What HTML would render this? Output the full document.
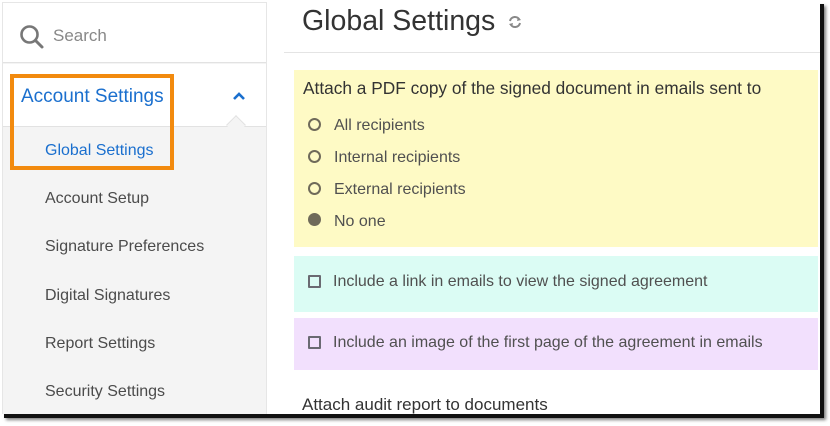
<!DOCTYPE html>
<html><head><style>
*{margin:0;padding:0;box-sizing:border-box}
body{width:830px;height:426px;background:#fff;position:relative;overflow:hidden;font-family:"Liberation Sans",sans-serif;color:#4b4b4b}
.frame{position:absolute;left:0;top:0;width:820px;height:414px;background:#fff;overflow:hidden;box-shadow:4px 4px 0 #111,6px 6px 3px rgba(0,0,0,.5)}
.side{position:absolute;left:2px;top:2px;width:265px;height:420px;background:#f4f4f4;border:1px solid #e6e6e6}
.search{position:absolute;left:0;top:0;width:263px;height:60px;background:#fff;border-bottom:1px solid #e2e2e2}
.acct{position:absolute;left:0;top:61px;width:263px;height:63px;background:#fff;border-bottom:1px solid #e2e2e2}
.t{position:absolute;font-size:16px;white-space:nowrap}
.box{position:absolute;left:294px;width:524px}
.opt{position:absolute;left:308px;font-size:16px;color:#505050;white-space:nowrap}
.rad{position:absolute;left:308px;width:13px;height:13px;border:2.5px solid #6f6a5a;border-radius:50%}
.chk{position:absolute;left:308px;width:13px;height:13px;border:2px solid #6a6a72;border-radius:1px}
</style></head><body>
<div class="frame">
<div class="side">
 <div class="search">
  <svg style="position:absolute;left:16px;top:21px" width="26" height="26" viewBox="0 0 26 26"><circle cx="10.5" cy="10.5" r="8" fill="none" stroke="#777" stroke-width="2.6"/><line x1="16.5" y1="16.5" x2="23" y2="23" stroke="#777" stroke-width="3" stroke-linecap="round"/></svg>
  <div class="t" style="left:50px;top:23px;font-size:17px;color:#888">Search</div>
 </div>
 <div class="acct">
  <div class="t" style="left:18px;top:22px;font-size:19px;color:#1a6fce">Account Settings</div>
  <svg style="position:absolute;left:229px;top:27px" width="14" height="10" viewBox="0 0 14 10"><path d="M2 8 L7 3 L12 8" fill="none" stroke="#1a6fce" stroke-width="2.6"/></svg>
  <div style="position:absolute;left:226px;top:54px;width:14px;height:14px;background:#f4f4f4;border-left:1px solid #e2e2e2;border-top:1px solid #e2e2e2;transform:rotate(45deg)"></div>
 </div>
 <div class="t" style="left:42px;top:139px;color:#1a6fce">Global Settings</div>
 <div class="t" style="left:42px;top:187px">Account Setup</div>
 <div class="t" style="left:42px;top:235px">Signature Preferences</div>
 <div class="t" style="left:42px;top:284px">Digital Signatures</div>
 <div class="t" style="left:42px;top:332px">Report Settings</div>
 <div class="t" style="left:42px;top:380px">Security Settings</div>
</div>
<div style="position:absolute;left:10px;top:74px;width:164px;height:96px;border:4px solid #f28a0e"></div>
<div class="t" style="left:302px;top:5px;font-size:28.5px;color:#333;font-weight:300">Global Settings</div>
<svg style="position:absolute;left:507px;top:14px" width="16" height="16" viewBox="0 0 16 16"><path d="M3 7 A5 5 0 0 1 12.5 6" fill="none" stroke="#888" stroke-width="2"/><path d="M13 9 A5 5 0 0 1 3.5 10" fill="none" stroke="#888" stroke-width="2"/><path d="M11 3 L14 6 L10 7Z" fill="#888"/><path d="M5 13 L2 10 L6 9Z" fill="#888"/></svg>
<div style="position:absolute;left:284px;top:52px;width:540px;height:1px;background:#e4e4e4"></div>
<div class="box" style="top:70px;height:177px;background:#fefac5"></div>
<div class="box" style="top:256px;height:56px;background:#dbfcf4"></div>
<div class="box" style="top:318px;height:52px;background:#f2e0fd"></div>
<div class="t" style="left:303px;top:78px;font-size:17.3px;color:#333">Attach a PDF copy of the signed document in emails sent to</div>
<div class="rad" style="top:118px"></div><div class="opt" style="left:334px;top:117px">All recipients</div>
<div class="rad" style="top:150px"></div><div class="opt" style="left:334px;top:149px">Internal recipients</div>
<div class="rad" style="top:182px"></div><div class="opt" style="left:334px;top:181px">External recipients</div>
<div class="rad" style="top:213px;background:#6f6a5a"></div><div class="opt" style="left:334px;top:213px">No one</div>
<div class="chk" style="top:275px"></div><div class="opt" style="left:333px;top:273px">Include a link in emails to view the signed agreement</div>
<div class="chk" style="top:336px"></div><div class="opt" style="left:333px;top:334px">Include an image of the first page of the agreement in emails</div>
<div class="t" style="left:302px;top:395px;font-size:17px;color:#333">Attach audit report to documents</div>
</div>
</body></html>
